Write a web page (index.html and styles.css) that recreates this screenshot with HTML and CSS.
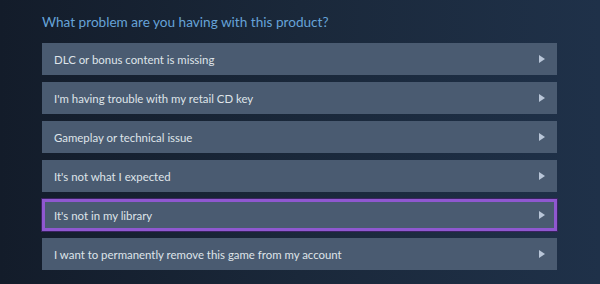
FILE: index.html
```html
<!DOCTYPE html>
<html>
    <head>
        <meta name="viewport" content="width=device-width, initial-scale=1" />
        <link rel="stylesheet" href="styles.css">
    </head>
    <body class="maincontainer">
        <div class="panel">
            <h2 class="question">What problem are you having with this product?</h2>

            <div class="choices">
                <div class="choice">
                    <span>DLC or bonus content is missing</span>
                    <span class="arrow"></span>
                </div>
                <div class="choice">
                    <span>I'm having trouble with my retail CD key</span>
                    <span class="arrow"></span>
                </div>
                <div class="choice">
                    <span>Gameplay or technical issue</span>
                    <span class="arrow"></span>
                </div>
                <div class="choice">
                    <span>It's not what I expected</span>
                    <span class="arrow"></span>
                </div>
                <div class="choice selected">
                    <span>It's not in my library</span>
                    <span class="arrow"></span>
                </div>
                <div class="choice">
                    <span>I want to permanently remove this game from my account</span>
                    <span class="arrow"></span>
                </div>
            </div>
        </div>
    </body>
</html>
```

FILE: styles.css
```css
* {
    padding: 0;
    margin: 0;
    box-sizing: border-box;
}

:root {
    --color-row: #4a5b71;
    --color-text: #dfe4e9;
    --color-title: #66a3d8;
    --color-arrow: #b9c6d8;
    --color-pick: #8f58d0;
}

body.maincontainer {
    width: 600px;
    height: 284px;
    overflow: hidden;
    background: linear-gradient(to right, #131c2a, #1a283a 50%, #1f3149);
    font-family: Lato, "Open Sans", sans-serif;
}

div.panel {
    padding: 13px 43px 0 42px;
}

h2.question {
    font-weight: normal;
    font-size: 13.6px;
    line-height: 18px;
    color: var(--color-title);
    margin-bottom: 12px;
}

div.choices {
    display: flex;
    flex-direction: column;
    gap: 7px;
}

div.choice {
    display: flex;
    align-items: center;
    justify-content: space-between;
    height: 32px;
    padding: 0 12px 0 12px;

    background: var(--color-row);
    color: var(--color-text);
    font-size: 11.4px;
}

div.choice.selected {
    border: 3px solid var(--color-pick);
    box-shadow: 0 0 0 1px #3a2360;
    padding: 0 9px 0 9px;
}

span.arrow {
    width: 0;
    height: 0;
    border-top: 4.5px solid transparent;
    border-bottom: 4.5px solid transparent;
    border-left: 6px solid var(--color-arrow);
}
```
